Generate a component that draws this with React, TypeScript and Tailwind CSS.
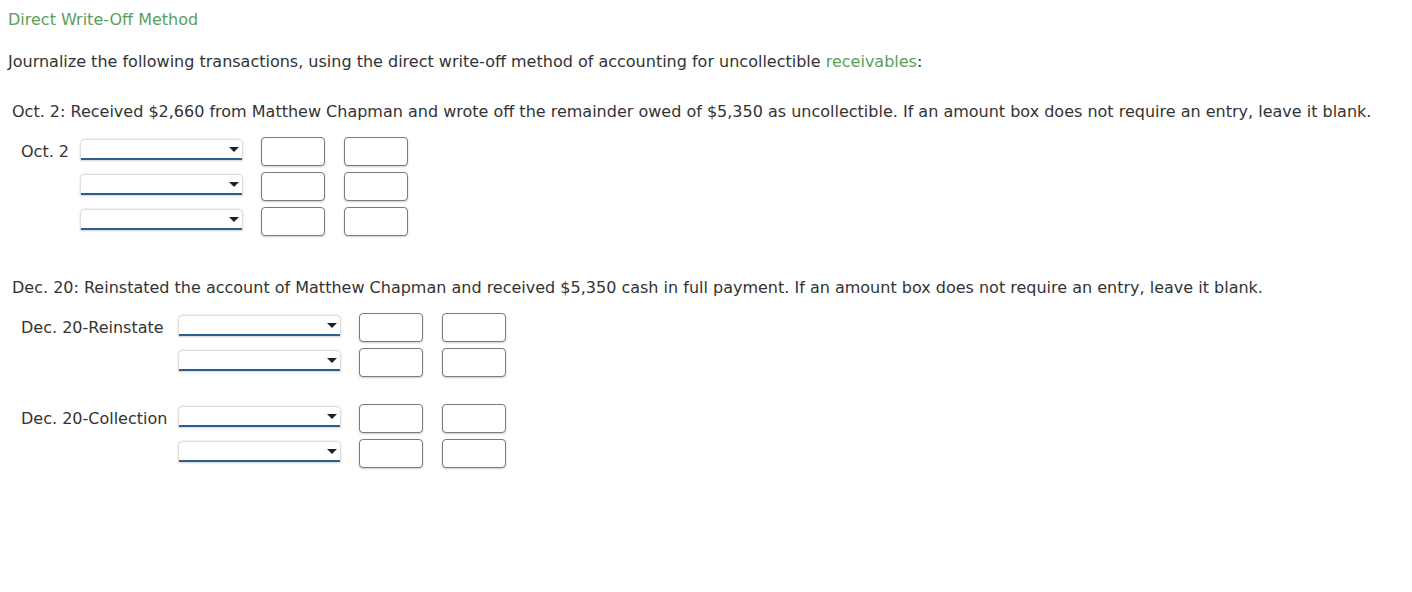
import React from 'react';

const font = { fontFamily: '"DejaVu Sans", Verdana, sans-serif' };

function Select({ width = 'w-[161px]' }: { width?: string }) {
  return (
    <div className={`relative h-[20px] ${width} -mt-[3px] rounded-t-[4px] bg-white shadow-[0_0_2px_1px_rgba(0,0,0,0.18)] border-b-2 border-[#2b5f8c]`}>
      <span className="absolute right-[3px] top-[7px] w-0 h-0 border-l-[5px] border-r-[5px] border-t-[5px] border-l-transparent border-r-transparent border-t-[#222]" />
    </div>
  );
}

function Amount() {
  return <div className="h-[29px] w-[64px] rounded-[4px] border border-[#7a7a7a] bg-white shadow-[0_1px_2px_rgba(0,0,0,0.2)]" />;
}

function EntryRow({ label, labelWidth }: { label?: string; labelWidth: string }) {
  return (
    <div className="flex items-center h-[35px]">
      <div className={`${labelWidth} pl-[21px] text-[16px] text-[#333] whitespace-nowrap`}>{label}</div>
      <Select />
      <div className="ml-[19px]"><Amount /></div>
      <div className="ml-[19px]"><Amount /></div>
    </div>
  );
}

export default function App() {
  return (
    <div className="bg-white min-h-[592px] text-[#333] text-[16px] leading-[24px]" style={font}>
      <div className="pt-[8px] pl-[8px] text-[#5a9f5a]">Direct Write-Off Method</div>
      <p className="mt-[18px] pl-[8px]">
        Journalize the following transactions, using the direct write-off method of accounting for uncollectible{' '}
        <span className="text-[#5a9f5a]">receivables</span>:
      </p>

      <p className="mt-[26px] pl-[12px] whitespace-nowrap">
        Oct. 2: Received $2,660 from Matthew Chapman and wrote off the remainder owed of $5,350 as uncollectible. If an amount box does not require an entry, leave it blank.
      </p>
      <div className="mt-[10px]">
        <EntryRow label="Oct. 2" labelWidth="w-[81px]" />
        <EntryRow labelWidth="w-[81px]" />
        <EntryRow labelWidth="w-[81px]" />
      </div>

      <p className="mt-[37px] pl-[12px]">
        Dec. 20: Reinstated the account of Matthew Chapman and received $5,350 cash in full payment. If an amount box does not require an entry, leave it blank.
      </p>
      <div className="mt-[10px]">
        <EntryRow label="Dec. 20-Reinstate" labelWidth="w-[179px]" />
        <EntryRow labelWidth="w-[179px]" />
        <div className="h-[21px]" />
        <EntryRow label="Dec. 20-Collection" labelWidth="w-[179px]" />
        <EntryRow labelWidth="w-[179px]" />
      </div>
    </div>
  );
}
